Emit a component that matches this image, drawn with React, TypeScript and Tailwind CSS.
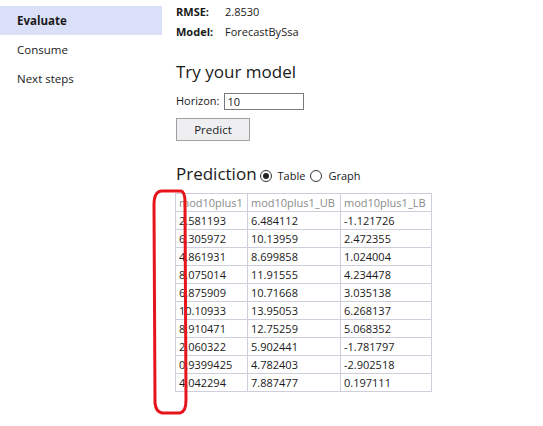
import React from "react";

const rows = [
  ["2.581193", "6.484112", "-1.121726"],
  ["6.305972", "10.13959", "2.472355"],
  ["4.861931", "8.699858", "1.024004"],
  ["8.075014", "11.91555", "4.234478"],
  ["6.875909", "10.71668", "3.035138"],
  ["10.10933", "13.95053", "6.268137"],
  ["8.910471", "12.75259", "5.068352"],
  ["2.060322", "5.902441", "-1.781797"],
  ["0.9399425", "4.782403", "-2.902518"],
  ["4.042294", "7.887477", "0.197111"],
];

const font = { fontFamily: "'Open Sans', 'Noto Sans', sans-serif" };

export default function App() {
  return (
    <div className="relative w-[543px] h-[426px] bg-white text-[#1a1a1a] overflow-hidden" style={font}>
      <div className="flex">
        {/* Sidebar */}
        <div className="w-[162px] pt-[6px] text-[11.5px]">
          <div className="h-[29px] flex items-center pl-[17px] bg-[#dae0f8] font-bold">Evaluate</div>
          <div className="h-[29px] flex items-center pl-[17px]">Consume</div>
          <div className="h-[29px] flex items-center pl-[17px]">Next steps</div>
        </div>

        {/* Main */}
        <div className="pl-[14px] pt-[3px] text-[11px]">
          <div className="grid grid-cols-[49px_auto] gap-y-[3px] leading-[17px]">
            <span className="font-bold">RMSE:</span>
            <span>2.8530</span>
            <span className="font-bold">Model:</span>
            <span>ForecastBySsa</span>
          </div>

          <h2 className="text-[17px] leading-[24px] mt-[20px]">Try your model</h2>

          <div className="flex items-center mt-[9px] gap-[5px]">
            <span>Horizon:</span>
            <input
              defaultValue="10"
              className="w-[80px] h-[17px] border border-[#7a7a7a] px-[2px] text-[11px] leading-[15px] outline-none"
              style={font}
            />
          </div>

          <button
            className="mt-[8px] w-[74px] h-[23px] bg-[#efeff2] border border-[#a0a0a0] text-[11.5px] flex items-center justify-center"
            style={font}
          >
            Predict
          </button>

          <div className="flex items-end mt-[21px] gap-[3px]">
            <span className="text-[17px] leading-[24px]">Prediction</span>
            <label className="flex items-center gap-[6px] pb-[2px]">
              <span className="w-[12px] h-[12px] rounded-full border border-[#333] flex items-center justify-center">
                <span className="w-[6px] h-[6px] rounded-full bg-[#222]" />
              </span>
              <span className="text-[11px]">Table</span>
            </label>
            <label className="flex items-center gap-[6px] pb-[2px] ml-[2px]">
              <span className="w-[12px] h-[12px] rounded-full border border-[#333]" />
              <span className="text-[11px]">Graph</span>
            </label>
          </div>

          <table className="mt-[7px] -ml-[1px] border-collapse text-[11px]">
            <thead>
              <tr className="h-[18px]">
                <th className="w-[72px] border border-[#cfcfdc] font-normal text-left pl-[3px] text-[#8a8a8a] leading-[16px]">mod10plus1</th>
                <th className="w-[93px] border border-[#cfcfdc] font-normal text-left pl-[3px] text-[#8a8a8a] leading-[16px]">mod10plus1_UB</th>
                <th className="w-[91px] border border-[#cfcfdc] font-normal text-left pl-[3px] text-[#8a8a8a] leading-[16px]">mod10plus1_LB</th>
              </tr>
            </thead>
            <tbody>
              {rows.map((r, i) => (
                <tr key={i} className="h-[18px]">
                  {r.map((c, j) => (
                    <td key={j} className="border border-[#cfcfdc] pl-[3px] leading-[16px]">{c}</td>
                  ))}
                </tr>
              ))}
            </tbody>
          </table>
        </div>
      </div>

      {/* hand-drawn annotation */}
      <svg className="absolute left-0 top-0 pointer-events-none" width="543" height="426">
        <path
          d="M155 403 L154 205 Q154 191 162 191 L181 191 Q185 192 185 202 L186 400 Q186 412 180 413 L162 413 Q156 412 155 403 Z"
          fill="none"
          stroke="#e8141c"
          strokeWidth="3"
          strokeLinejoin="round"
        />
      </svg>
    </div>
  );
}
